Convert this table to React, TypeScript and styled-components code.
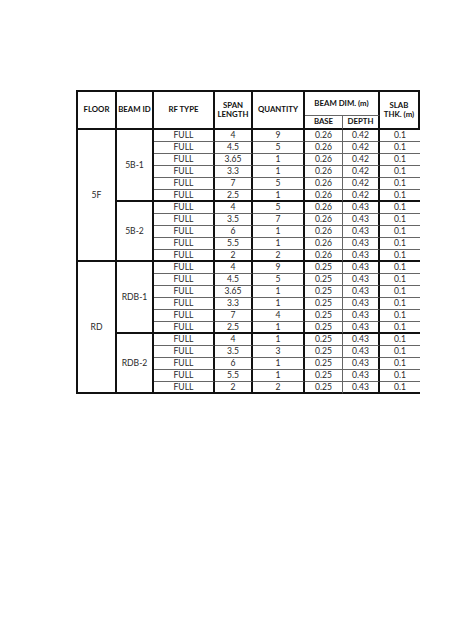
import styled, { createGlobalStyle } from 'styled-components'

const GlobalStyle = createGlobalStyle`
  html, body {
    margin: 0;
    padding: 0;
    background: #ffffff;
  }
  body {
    width: 474px;
    height: 632px;
    overflow: hidden;
    font-family: Lato, "Open Sans", "Liberation Sans", sans-serif;
  }
`

const THICK = '2px solid #111'
const THIN = '1px solid #666'

const Page = styled.div`
  padding: 90px 0 0 76px;
`

const Sheet = styled.div`
  display: grid;
  width: max-content;
  grid-template-columns: 39px 37px 61px 38px 52px 38px 37px 40px;
  grid-template-rows: 24px 14px repeat(22, 12px);
  border-top: ${THICK};
  border-left: ${THICK};
  box-sizing: border-box;
`

type Edge = 'thick' | 'thin' | 'none'

const edge = (e: Edge) => (e === 'thick' ? THICK : e === 'thin' ? THIN : 'none')

const Cell = styled.div<{ $right: Edge; $bottom: Edge; $col: string; $row: string }>`
  grid-column: ${(p) => p.$col};
  grid-row: ${(p) => p.$row};
  box-sizing: border-box;
  display: flex;
  align-items: center;
  justify-content: center;
  padding-top: 0.5px;
  border-right: ${(p) => edge(p.$right)};
  border-bottom: ${(p) => edge(p.$bottom)};
  font-size: 8.6px;
  color: #2a2a2a;
  line-height: 1;
  white-space: nowrap;
`

const Head = styled(Cell)`
  font-size: 7.8px;
  font-weight: 700;
  color: #111;
  text-align: center;
  line-height: 1.25;
  white-space: normal;
`

type Row = [string, string, string, string]

const groups: { floor: string; beams: { id: string; rows: Row[] }[] }[] = [
  {
    floor: '5F',
    beams: [
      {
        id: '5B-1',
        rows: [
          ['4', '9', '0.26', '0.42'],
          ['4.5', '5', '0.26', '0.42'],
          ['3.65', '1', '0.26', '0.42'],
          ['3.3', '1', '0.26', '0.42'],
          ['7', '5', '0.26', '0.42'],
          ['2.5', '1', '0.26', '0.42'],
        ],
      },
      {
        id: '5B-2',
        rows: [
          ['4', '5', '0.26', '0.43'],
          ['3.5', '7', '0.26', '0.43'],
          ['6', '1', '0.26', '0.43'],
          ['5.5', '1', '0.26', '0.43'],
          ['2', '2', '0.26', '0.43'],
        ],
      },
    ],
  },
  {
    floor: 'RD',
    beams: [
      {
        id: 'RDB-1',
        rows: [
          ['4', '9', '0.25', '0.43'],
          ['4.5', '5', '0.25', '0.43'],
          ['3.65', '1', '0.25', '0.43'],
          ['3.3', '1', '0.25', '0.43'],
          ['7', '4', '0.25', '0.43'],
          ['2.5', '1', '0.25', '0.43'],
        ],
      },
      {
        id: 'RDB-2',
        rows: [
          ['4', '1', '0.25', '0.43'],
          ['3.5', '3', '0.25', '0.43'],
          ['6', '1', '0.25', '0.43'],
          ['5.5', '1', '0.25', '0.43'],
          ['2', '2', '0.25', '0.43'],
        ],
      },
    ],
  },
]

// right-edge style of the data columns: RF TYPE, SPAN, QTY, BASE, DEPTH, SLAB
const dataRight: Edge[] = ['thick', 'thick', 'thick', 'thin', 'thick', 'none']

export default function App() {
  const cells: JSX.Element[] = []
  let row = 3

  groups.forEach((g) => {
    const count = g.beams.reduce((n, b) => n + b.rows.length, 0)
    cells.push(
      <Cell key={g.floor} $col="1" $row={`${row} / span ${count}`} $right="thick" $bottom="thick">
        {g.floor}
      </Cell>
    )
    g.beams.forEach((b) => {
      cells.push(
        <Cell key={b.id} $col="2" $row={`${row} / span ${b.rows.length}`} $right="thick" $bottom="thick">
          {b.id}
        </Cell>
      )
      b.rows.forEach((r, i) => {
        const bottom: Edge = i === b.rows.length - 1 ? 'thick' : 'thin'
        const values = ['FULL', r[0], r[1], r[2], r[3], '0.1']
        values.forEach((v, c) => {
          cells.push(
            <Cell
              key={`${b.id}-${i}-${c}`}
              $col={`${c + 3}`}
              $row={`${row}`}
              $right={dataRight[c]}
              $bottom={bottom}
            >
              {v}
            </Cell>
          )
        })
        row += 1
      })
    })
  })

  return (
    <>
      <GlobalStyle />
      <Page>
        <Sheet>
          <Head $col="1" $row="1 / span 2" $right="thick" $bottom="thick">FLOOR</Head>
          <Head $col="2" $row="1 / span 2" $right="thick" $bottom="thick">BEAM ID</Head>
          <Head $col="3" $row="1 / span 2" $right="thick" $bottom="thick">RF TYPE</Head>
          <Head $col="4" $row="1 / span 2" $right="thick" $bottom="thick">SPAN<br />LENGTH</Head>
          <Head $col="5" $row="1 / span 2" $right="thick" $bottom="thick">QUANTITY</Head>
          <Head $col="6 / span 2" $row="1" $right="thick" $bottom="thin">BEAM DIM. (m)</Head>
          <Head $col="6" $row="2" $right="thin" $bottom="thick">BASE</Head>
          <Head $col="7" $row="2" $right="thick" $bottom="thick">DEPTH</Head>
          <Head $col="8" $row="1 / span 2" $right="thick" $bottom="thick">SLAB<br />THK. (m)</Head>
          {cells}
        </Sheet>
      </Page>
    </>
  )
}
